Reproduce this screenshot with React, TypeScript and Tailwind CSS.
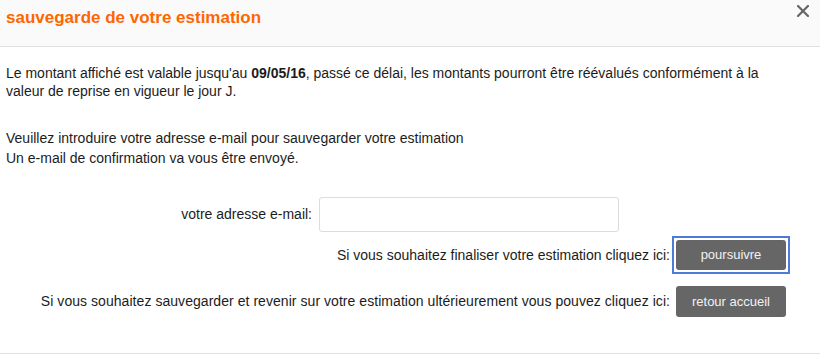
import React from "react";

function CloseIcon() {
  return (
    <svg width="12" height="12" viewBox="0 0 12 12" className="block">
      <path d="M1 1L11 11M11 1L1 11" stroke="#666" strokeWidth="2.2" strokeLinecap="square" />
    </svg>
  );
}

export default function App() {
  return (
    <div
      className="w-[820px] h-[357px] bg-white text-[#1c1c1c] text-[14px] overflow-hidden"
      style={{ fontFamily: '"Liberation Sans", Arial, sans-serif' }}
    >
      {/* header */}
      <div className="h-[47px] bg-[#fafafa] border-b border-[#e0e0e0] flex items-start justify-between">
        <h1 className="pl-[6px] pt-[7px] text-[17px] leading-[21px] font-bold text-[#ff6600]">
          sauvegarde de votre estimation
        </h1>
        <button className="mt-[5px] mr-[11px]">
          <CloseIcon />
        </button>
      </div>

      {/* body */}
      <div className="h-[307px] border-b border-[#e0e0e0] px-[6px] pt-[17px]">
        <p className="leading-[18px] max-w-[790px]">
          Le montant affiché est valable jusqu'au <b>09/05/16</b>, passé ce délai, les montants pourront être
          réévalués conformément à la valeur de reprise en vigueur le jour J.
        </p>

        <p className="mt-[28px] leading-[20px]">
          Veuillez introduire votre adresse e-mail pour sauvegarder votre estimation
          <br />
          Un e-mail de confirmation va vous être envoyé.
        </p>

        <div className="mt-[29px] flex flex-col items-end">
          <div className="flex items-center gap-[7px] mr-[195px]">
            <label>votre adresse e-mail:</label>
            <input
              type="text"
              className="w-[300px] h-[35px] bg-white border border-[#dcdcdc] rounded-[3px] outline-none"
            />
          </div>

          <div className="mt-[8px] flex items-center gap-[6px] mr-[28px]">
            <span>Si vous souhaitez finaliser votre estimation cliquez ici:</span>
            <div className="-m-[4px] p-[2px] border-2 border-[#4d7cd6]">
              <button className="block w-[110px] h-[30px] bg-[#666] text-[#f2f2f2] text-[13px] rounded-[3px]">
                poursuivre
              </button>
            </div>
          </div>

          <div className="mt-[16px] flex items-center gap-[6px] mr-[28px]">
            <span className="tracking-[0.05px]">
              Si vous souhaitez sauvegarder et revenir sur votre estimation ultérieurement vous pouvez cliquez ici:
            </span>
            <button className="w-[110px] h-[31px] bg-[#666] text-[#f2f2f2] text-[13px] rounded-[3px]">
              retour accueil
            </button>
          </div>
        </div>
      </div>
    </div>
  );
}
